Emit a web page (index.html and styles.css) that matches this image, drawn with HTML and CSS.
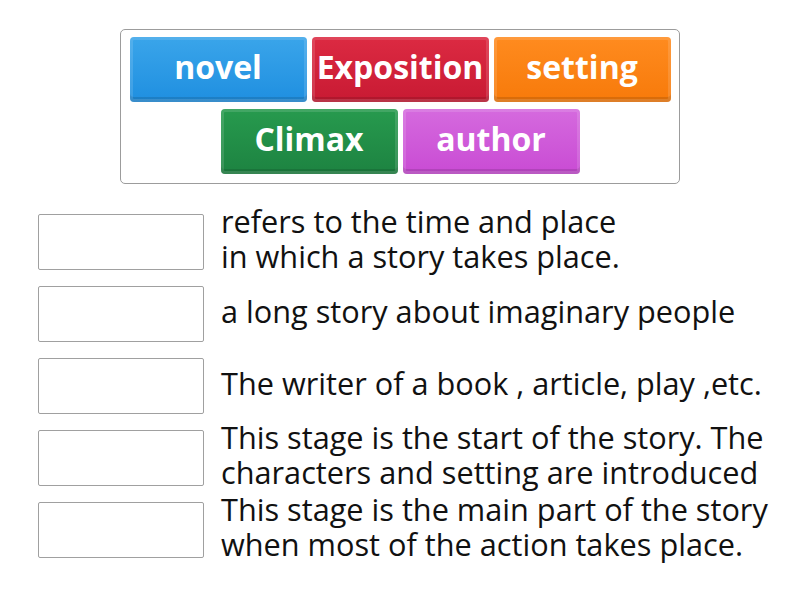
FILE: index.html
```html
<!DOCTYPE html>
<html>
<head>
<meta charset="utf-8">
<link rel="stylesheet" href="styles.css">
</head>
<body>
<div class="page">
  <div class="bank">
    <div class="tile blue">novel</div>
    <div class="tile red">Exposition</div>
    <div class="tile orange">setting</div>
    <div class="tile green">Climax</div>
    <div class="tile purple">author</div>
  </div>
  <div class="list">
    <div class="row"><div class="slot"></div><div class="desc">refers to the time and place<br>in which a story takes place.</div></div>
    <div class="row"><div class="slot"></div><div class="desc">a long story about imaginary people</div></div>
    <div class="row"><div class="slot"></div><div class="desc">The writer of a book , article, play ,etc.</div></div>
    <div class="row"><div class="slot"></div><div class="desc">This stage is the start of the story. The<br>characters and setting are introduced</div></div>
    <div class="row"><div class="slot"></div><div class="desc">This stage is the main part of the story<br>when most of the action takes place.</div></div>
  </div>
</div>
</body>
</html>
```

FILE: styles.css
```css
* { box-sizing: border-box; }
html, body { margin: 0; padding: 0; background: #fff; }
body { font-family: "Open Sans", "Liberation Sans", sans-serif; color: #111; }
.page { width: 800px; height: 600px; overflow: hidden; padding-top: 29px; }
.bank {
  width: 560px;
  margin-left: 120px;
  border: 1px solid #9c9c9c;
  border-radius: 5px;
  padding: 7px 8px 9px;
  display: flex;
  flex-wrap: wrap;
  justify-content: center;
  gap: 7px 5px;
}
.tile {
  width: 177px;
  height: 65px;
  border-radius: 4px;
  color: #fff;
  font-weight: 700;
  font-size: 32px;
  display: flex;
  align-items: center;
  justify-content: center;
  padding-bottom: 6px;
  box-shadow: inset 0 0 0 3px rgba(255,255,255,0.13), inset 0 -5px 0 rgba(0,0,0,0.12);
}
.blue { background: linear-gradient(#3aa5ea, #1f8fe0); }
.red { background: linear-gradient(#dc2a42, #c81a33); }
.orange { background: linear-gradient(#ff8b1f, #f77a0a); }
.green { background: linear-gradient(#279a4e, #1d8341); }
.purple { background: linear-gradient(#d56ade, #c94bd4); }
.list {
  margin-top: 30px;
  margin-left: 38px;
  display: flex;
  flex-direction: column;
  gap: 16px;
}
.row {
  height: 56px;
  display: flex;
  align-items: center;
}
.slot {
  width: 166px;
  height: 56px;
  flex: none;
  border: 1px solid #a0a0a0;
  border-radius: 2px;
  background: #fff;
}
.desc {
  margin-left: 17px;
  font-size: 30.7px;
  line-height: 35px;
  white-space: nowrap;
  margin-bottom: 6px;
}
```
